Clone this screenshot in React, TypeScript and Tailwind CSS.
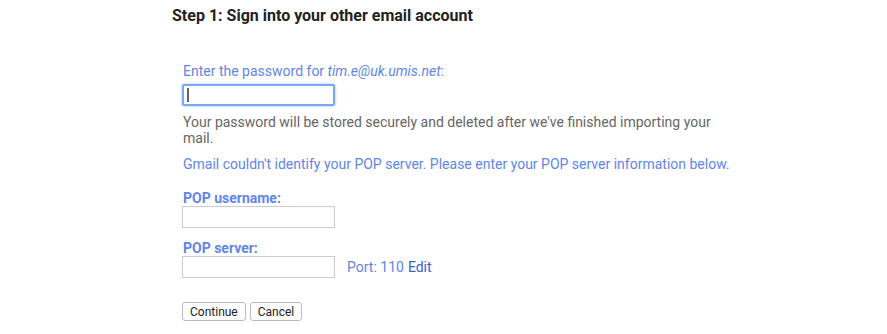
export default function App() {
  const blue = "text-[#5f86e8]";
  return (
    <div className="w-[887px] h-[334px] bg-white font-['Roboto',sans-serif] text-[14px] overflow-hidden">
      <div className="pl-[172px] pt-[6px]">
        <h1 className="text-[16px] font-bold text-[#222] leading-[20px]">Step 1: Sign into your other email account</h1>
        <div className="pl-[11px] pt-[37px] w-[561px]">
          <div className={`${blue} leading-[16px]`}>
            Enter the password for <i>tim.e@uk.umis.net</i>:
          </div>
          <div className="mt-[5px] -ml-[1px] w-[153px] h-[22px] border-2 border-[#7aa7f0] rounded-[2px] shadow-[0_0_3px_#9cc0f7] flex items-center pl-[3px]">
            <span className="w-[2px] h-[14px] bg-[#666]" />
          </div>
          <p className="mt-[8px] text-[#666] leading-[16px] w-[550px]">
            Your password will be stored securely and deleted after we've finished importing your mail.
          </p>
          <p className={`mt-[10px] ${blue} leading-[16px]`}>
            Gmail couldn't identify your POP server. Please enter your POP server information below.
          </p>
          <div className={`mt-[18px] ${blue} font-bold leading-[16px]`}>POP username:</div>
          <div className="-ml-[1px] w-[153px] h-[22px] border border-[#ccc]" />
          <div className={`mt-[12px] ${blue} font-bold leading-[16px]`}>POP server:</div>
          <div className="-ml-[1px] flex items-center">
            <div className="w-[153px] h-[22px] border border-[#ccc]" />
            <span className={`ml-[12px] ${blue}`}>Port: 110</span>
            <span className="ml-[4px] text-[#3b5fc9]">Edit</span>
          </div>
          <div className="mt-[24px] -ml-[1px] flex gap-[4px]">
            <button className="h-[19px] px-[7px] text-[12px] text-[#222] border border-[#bbb] rounded-[3px] bg-white leading-none">Continue</button>
            <button className="h-[19px] px-[7px] text-[12px] text-[#222] border border-[#bbb] rounded-[3px] bg-white leading-none">Cancel</button>
          </div>
        </div>
      </div>
    </div>
  );
}
